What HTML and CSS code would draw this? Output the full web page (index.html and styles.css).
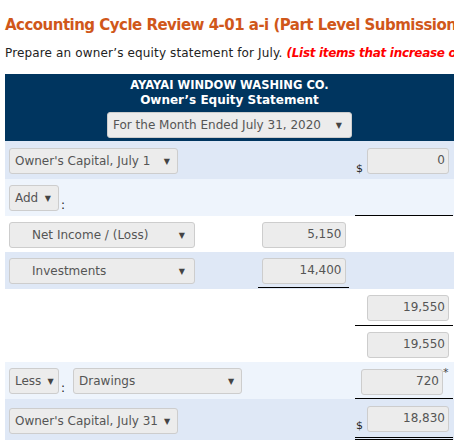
FILE: index.html
```html
<!DOCTYPE html>
<html>
<head>
<meta charset="utf-8">
<link rel="stylesheet" href="styles.css">
</head>
<body>
<h1 class="title">Accounting Cycle Review 4-01 a-i (Part Level Submission)</h1>
<p class="instr">Prepare an owner’s equity statement for July. <span class="note">(List items that increase owner’s equity first.)</span></p>
<div class="stmt">
  <div class="head">
    <div class="co">AYAYAI WINDOW WASHING CO.</div>
    <div class="nm">Owner’s Equity Statement</div>
    <div class="sel period"><span>For the Month Ended July 31, 2020</span><span class="caret">▼</span></div>
  </div>

  <div class="row dark first">
    <div class="c1"><div class="sel w169"><span>Owner's Capital, July 1</span><span class="caret">▼</span></div></div>
    <div class="c2"></div>
    <div class="c3"><span class="dol">$</span><div class="amt">0</div></div>
  </div>

  <div class="row light">
    <div class="c1"><div class="sel w50"><span>Add</span><span class="caret">▼</span></div><span class="colon">:</span></div>
    <div class="c2"></div>
    <div class="c3 ul"></div>
  </div>

  <div class="row short">
    <div class="c1"><div class="sel w186 ind"><span>Net Income / (Loss)</span><span class="caret">▼</span></div></div>
    <div class="c2"><div class="amt">5,150</div></div>
    <div class="c3"></div>
  </div>

  <div class="row dark">
    <div class="c1"><div class="sel w186 ind"><span>Investments</span><span class="caret">▼</span></div></div>
    <div class="c2 ul"><div class="amt">14,400</div></div>
    <div class="c3"></div>
  </div>

  <div class="row">
    <div class="c1"></div>
    <div class="c2"></div>
    <div class="c3 ul"><div class="amt">19,550</div></div>
  </div>

  <div class="row short">
    <div class="c1"></div>
    <div class="c2"></div>
    <div class="c3"><div class="amt">19,550</div></div>
  </div>

  <div class="row light">
    <div class="c1"><div class="sel w50"><span>Less</span><span class="caret">▼</span></div><span class="colon">:</span><div class="sel w169 gap"><span>Drawings</span><span class="caret">▼</span></div></div>
    <div class="c2"></div>
    <div class="c3 ul star"><div class="amt">720</div><span class="ast">*</span></div>
  </div>

  <div class="row dark last">
    <div class="c1"><div class="sel w169"><span>Owner's Capital, July 31</span><span class="caret">▼</span></div></div>
    <div class="c2"></div>
    <div class="c3 dbl"><span class="dol">$</span><div class="amt">18,830</div></div>
  </div>
</div>
</body>
</html>
```
FILE: styles.css
```css
html, body {
  margin: 0;
  padding: 0;
  overflow: hidden;
  background: #fff;
}
body {
  font-family: "DejaVu Sans", Verdana, sans-serif;
  color: #222;
  width: 454px;
}
.title {
  margin: 0;
  padding: 16px 0 0 5px;
  font-size: 15px;
  line-height: 18px;
  font-weight: bold;
  letter-spacing: -0.52px;
  color: #d0571a;
  white-space: nowrap;
}
.instr {
  margin: 0;
  padding: 12px 0 0 5px;
  font-size: 12px;
  line-height: 15px;
  letter-spacing: 0.15px;
  white-space: nowrap;
  color: #222;
}
.note {
  color: #ff0000;
  font-weight: bold;
  font-style: italic;
  letter-spacing: -0.3px;
}
.stmt {
  margin: 13px 0 0 5px;
  width: 449px;
}
.head {
  background: #00355f;
  color: #fff;
  text-align: center;
  padding: 4px 0 3px;
  font-weight: bold;
  font-size: 12px;
  line-height: 15px;
}
.head .co { font-size: 11.5px; }
.sel {
  box-sizing: border-box;
  height: 26px;
  display: inline-flex;
  align-items: center;
  justify-content: space-between;
  background: #ececec;
  border: 1px solid #cdcdcd;
  border-radius: 3px;
  padding: 0 7px 0 5px;
  font-size: 12px;
  font-weight: normal;
  color: #555;
  white-space: nowrap;
  vertical-align: top;
}
.caret {
  font-size: 8px;
  color: #444;
  margin-left: 6px;
}
.period {
  width: 245px;
  margin-top: 4px;
  padding-right: 9px;
  text-align: left;
}
.w169 { width: 169px; }
.w50 { width: 50px; }
.w186 { width: 186px; padding-left: 22px; padding-right: 9px; }
.gap { margin-left: 8px; }
.row {
  display: grid;
  grid-template-columns: 250px 97px 102px;
  height: 37px;
}
.row.short { height: 36px; }
.row.first { height: 38px; }
.row.first > div { padding-top: 7px; }
.row.last { height: 41px; }
.row.last > .c1 { padding-top: 9px; }
.row.last > .c3 { padding-top: 7px; }
.row.dark { background: #dfe8f6; }
.row.light { background: #eef4fc; }
.row > div {
  box-sizing: border-box;
  padding-top: 6px;
  display: flex;
  align-items: flex-start;
}
.c1 { padding-left: 4px; }
.colon {
  align-self: flex-end;
  font-size: 12px;
  line-height: 12px;
  margin: 0 0 5px 2px;
  color: #222;
}
.c2 {
  margin: 0 3px;
  justify-content: center;
}
.c2.ul { margin-bottom: 1px; }
.c3 {
  margin: 0 1px 0 3px;
  padding-right: 4px;
  justify-content: flex-end;
}
.ul { border-bottom: 1px solid #000; }
.dbl { border-bottom: 3px double #000; }
.amt {
  box-sizing: border-box;
  width: 84px;
  height: 26px;
  background: #ececec;
  border: 1px solid #cdcdcd;
  border-radius: 3px;
  text-align: right;
  padding: 0 3px;
  font-size: 12px;
  line-height: 23px;
  color: #555;
}
.c3 .amt { width: 82px; }
.dol {
  align-self: flex-end;
  font-size: 11px;
  line-height: 11px;
  margin: 0 auto 5px 1px;
  color: #222;
}
.dbl .dol { margin-bottom: 6px; }
.star .amt { margin-top: 1px; }
.ast {
  font-size: 11px;
  line-height: 10px;
  width: 6px;
  color: #444;
}
```
